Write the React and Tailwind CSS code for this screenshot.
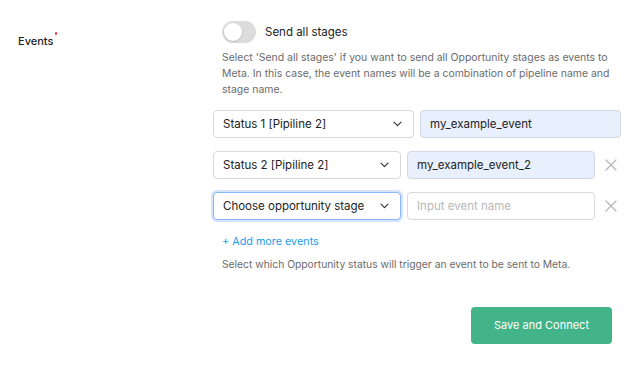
import React from "react";

function Chevron() {
  return (
    <svg width="9" height="6" viewBox="0 0 9 6" fill="none" className="shrink-0">
      <path d="M1 1.2l3.5 3.5L8 1.2" stroke="#333" strokeWidth="1.2" strokeLinecap="round" strokeLinejoin="round" />
    </svg>
  );
}

function XIcon() {
  return (
    <svg width="12" height="12" viewBox="0 0 12 12" fill="none">
      <path d="M1 1l10 10M11 1L1 11" stroke="#b5b5b5" strokeWidth="1.2" strokeLinecap="round" />
    </svg>
  );
}

function Row({ label, value, selW, inW, focus, placeholder, close }) {
  return (
    <div className="flex items-center">
      <div
        className={`flex h-[28px] items-center justify-between rounded-[4px] border bg-white pl-[9px] pr-[11px] text-[11.5px] text-[#222] ${
          focus ? "border-[#8cb8f7] shadow-[0_0_0_2px_#d3e4fc]" : "border-[#d9d9d9]"
        }`}
        style={{ width: selW }}
      >
        <span className="pt-[1px]">{label}</span>
        <Chevron />
      </div>
      <div
        className={`ml-[6px] flex h-[28px] items-center rounded-[4px] border px-[9px] pt-[1px] text-[11.5px] ${
          value ? "border-[#cfd8e3] bg-[#e8f0fe] text-[#222]" : "border-[#d9d9d9] bg-white text-[#b8b8b8]"
        }`}
        style={{ width: inW }}
      >
        {value || placeholder}
      </div>
      {close && (
        <div className="ml-[10px] flex w-[12px] items-center justify-center">
          <XIcon />
        </div>
      )}
    </div>
  );
}

export default function App() {
  return (
    <div
      className="relative h-[381px] w-[640px] bg-white"
      style={{ fontFamily: "Inter, 'Liberation Sans', sans-serif" }}
    >
      <div className="flex pt-[21px]">
        <div className="w-[213px] shrink-0 pl-[18px] pt-[6px]">
          <span className="relative text-[11px] font-medium text-[#222]">
            Events
            <span className="absolute -right-[4px] top-[-2px] h-[2.5px] w-[2.5px] rounded-full bg-[#e53e3e]" />
          </span>
        </div>
        <div className="flex flex-col">
          <div className="flex items-center pl-[9px]">
            <div className="relative h-[22px] w-[34px] rounded-full bg-[#dcdcdc]">
              <div className="absolute left-[2px] top-[2px] h-[18px] w-[18px] rounded-full bg-white shadow-[0_1px_2px_rgba(0,0,0,0.15)]" />
            </div>
            <span className="ml-[9px] pt-[1px] text-[11.5px] text-[#222]">Send all stages</span>
          </div>
          <p className="mt-[7px] w-[400px] pl-[9px] text-[10.45px] leading-[16px] text-[#6b6b6b]">
            Select 'Send all stages' if you want to send all Opportunity stages as events to Meta. In this case, the event names will be a combination of pipeline name and stage name.
          </p>
          <div className="mt-[12px] flex flex-col gap-[13px]">
            <Row label="Status 1 [Pipiline 2]" value="my_example_event" selW={201} inW={201} />
            <Row label="Status 2 [Pipiline 2]" value="my_example_event_2" selW={188} inW={188} close />
            <Row label="Choose opportunity stage" placeholder="Input event name" selW={188} inW={188} focus close />
          </div>
          <div className="mt-[14px] pl-[9px] text-[10.8px] text-[#1a9cf0]">+ Add more events</div>
          <div className="mt-[7px] pl-[9px] text-[10.3px] text-[#6b6b6b]">
            Select which Opportunity status will trigger an event to be sent to Meta.
          </div>
        </div>
      </div>
      <div className="mt-[34px] flex justify-end pr-[28px]">
        <button className="h-[37px] w-[141px] rounded-[4px] bg-[#43b48a] pt-[1px] text-[11px] text-white">
          Save and Connect
        </button>
      </div>
    </div>
  );
}
